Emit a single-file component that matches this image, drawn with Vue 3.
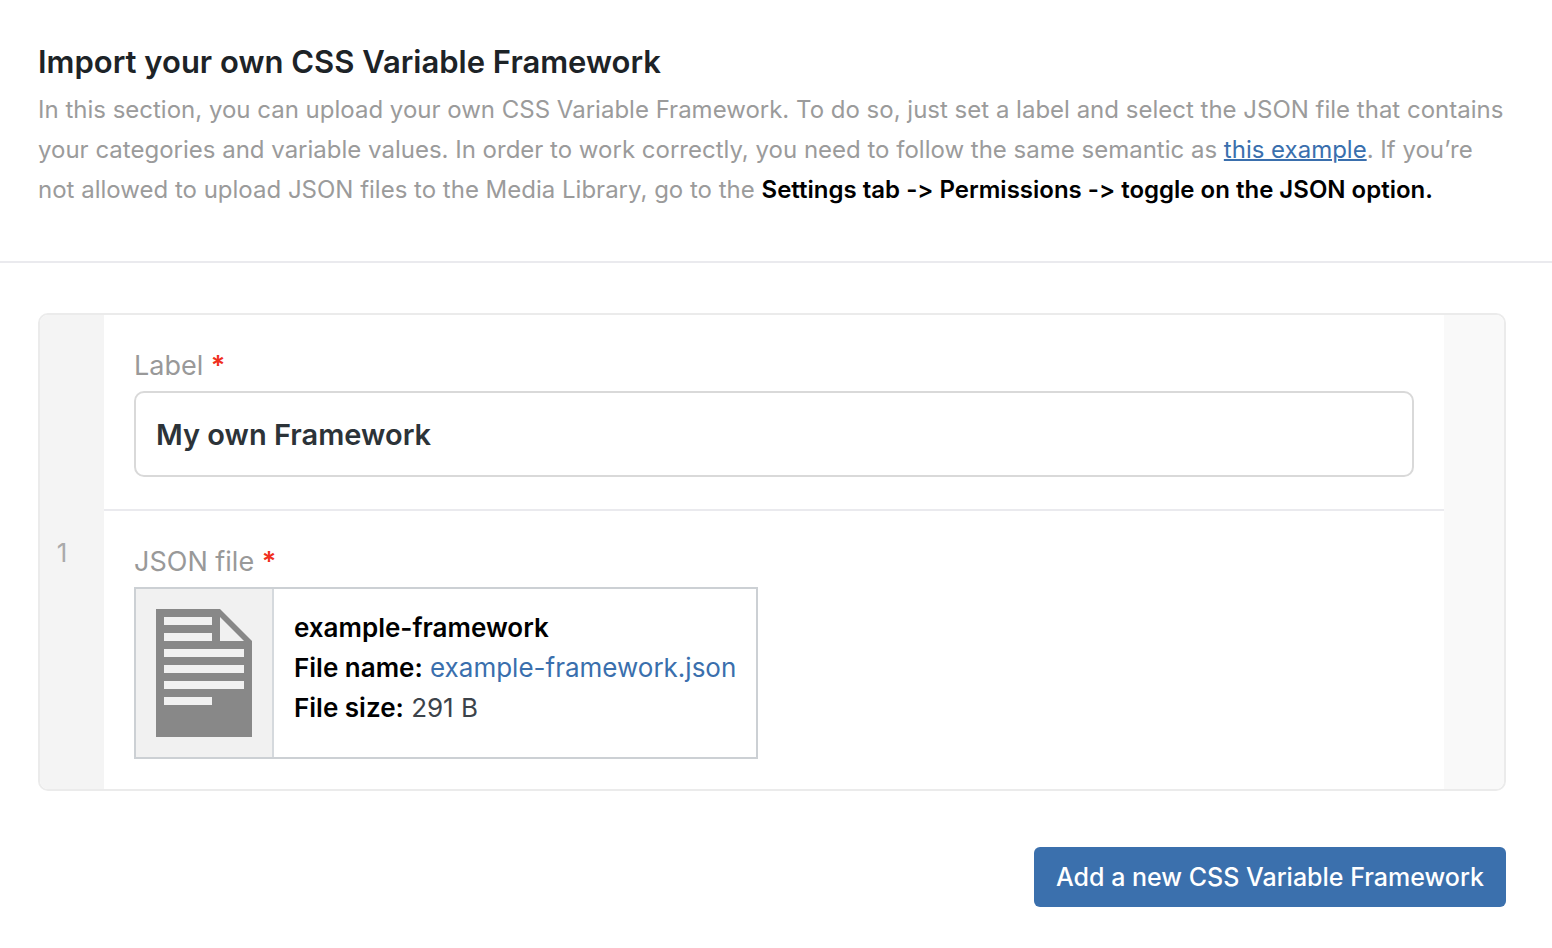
<script setup>
import { ref } from 'vue'

const label = ref('My own Framework')
</script>

<template>
  <main class="page">
    <header class="intro">
      <h1>Import your own CSS Variable Framework</h1>
      <p>
        In this section, you can upload your own CSS Variable Framework. To do so, just set a label and select the JSON file that contains your categories and variable values. In order to work correctly, you need to follow the same semantic as <a href="#">this example</a>. If you’re not allowed to upload JSON files to the Media Library, go to the <strong>Settings tab -&gt; Permissions -&gt; toggle on the JSON option.</strong>
      </p>
    </header>
    <section class="content">
      <div class="repeater">
        <div class="order">1</div>
        <div class="fields">
          <div class="field">
            <label for="framework-label">Label <span class="required">*</span></label>
            <input id="framework-label" v-model="label" type="text" required />
          </div>
          <div class="field">
            <div class="label">JSON file <span class="required">*</span></div>
            <div class="file">
              <div class="file-icon">
                <svg width="96" height="128" viewBox="0 0 96 128" aria-hidden="true">
                  <path fill="#888" d="M0 0H64L96 32V128H0Z" />
                  <path fill="#f1f1f1" d="M64 8V32H88ZM8 8H56V16H8ZM8 24H56V32H8ZM8 40H88V48H8ZM8 56H88V64H8ZM8 72H88V80H8ZM8 88H56V96H8Z" />
                </svg>
              </div>
              <div class="file-info">
                <p><strong>example-framework</strong></p>
                <p><strong>File name:</strong> <a href="#">example-framework.json</a></p>
                <p><strong>File size:</strong> 291 B</p>
              </div>
            </div>
          </div>
        </div>
        <div class="actions"></div>
      </div>
      <button type="button" class="add">Add a new CSS Variable Framework</button>
    </section>
  </main>
</template>

<style>
body {
  background: #fff;
}
</style>

<style scoped>
* {
  box-sizing: border-box;
}
.page {
  font-family: Inter, "Liberation Sans", sans-serif;
  font-variant-ligatures: none;
  color: #3c434a;
}
h1,
p {
  margin: 0;
}
.intro {
  padding: 42px 46px 51px 38px;
  border-bottom: 2px solid #eaeaee;
}
h1 {
  font-size: 31px;
  line-height: 40px;
  font-weight: 600;
  color: #1d2327;
}
.intro p {
  padding-top: 8px;
  font-size: 24px;
  line-height: 40px;
  color: #9b9b9b;
}
.intro strong,
.file-info strong {
  color: #000;
  font-weight: 600;
}
a {
  color: #3a6fad;
}
.intro a {
  text-decoration-thickness: 2px;
}
.content {
  display: flex;
  flex-direction: column;
  padding: 50px 46px 40px 38px;
}
.repeater {
  display: flex;
  border: 2px solid #ebebeb;
  border-radius: 10px;
  overflow: hidden;
}
.order {
  display: flex;
  align-items: center;
  justify-content: center;
  width: 64px;
  padding-right: 20px;
  background: #f4f4f4;
  color: #aaa;
  font-size: 26px;
}
.fields {
  flex: 1;
}
.actions {
  width: 60px;
  background: #f9f9f9;
}
.field {
  padding: 30px;
}
.field + .field {
  border-top: 2px solid #eaeaee;
}
label,
.label {
  display: block;
  height: 46px;
  line-height: 42px;
  font-size: 27px;
  color: #999;
}
.required {
  color: #f0301e;
  font-weight: 600;
}
input {
  display: block;
  width: 100%;
  height: 86px;
  margin: 0 0 2px;
  padding: 0 20px;
  border: 2px solid #d9d9d9;
  border-radius: 10px;
  background: #fff;
  font-family: inherit;
  font-size: 29px;
  font-weight: 600;
  color: #2c3338;
}
.file {
  display: flex;
  width: fit-content;
  border: 2px solid #ccd0d4;
}
.file-icon {
  padding: 20px;
  background: #f1f1f1;
  border-right: 2px solid #d5d9dd;
}
.file-icon svg {
  display: block;
}
.file-info {
  padding: 19px 20px;
  font-size: 26px;
  line-height: 40px;
}
.file-info a {
  text-decoration: none;
}
.add {
  align-self: flex-end;
  margin-top: 56px;
  height: 60px;
  padding: 0 22px;
  border: 0;
  border-radius: 6px;
  background: #3b70ad;
  color: #fff;
  font-family: inherit;
  font-size: 25px;
  font-weight: 500;
}
</style>
